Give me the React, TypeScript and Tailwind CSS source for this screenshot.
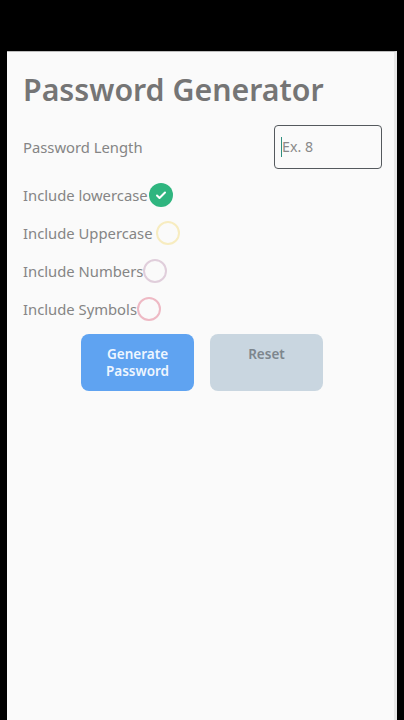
import React from "react";

function Circle({ border, className = "" }: { border: string; className?: string }) {
  return <span className={`block w-[24px] h-[24px] rounded-full border-2 shrink-0 ${border} ${className}`} />;
}

function Row({ label, children }: { label: string; children: React.ReactNode }) {
  return (
    <div className="flex items-center h-[38px]">
      <span className="text-[14.8px] leading-[24px] text-[#858585]">{label}</span>
      {children}
    </div>
  );
}

export default function App() {
  return (
    <div className="w-[404px] h-[720px] bg-black pt-[51px] pl-[7px] pr-[7px] overflow-hidden" style={{ fontFamily: '"Noto Sans", sans-serif' }}>
      <div className="relative h-[669px] bg-[#fafafa] border-t border-t-[#bdbdbd] border-r-[3px] border-r-[#e8e8e8] pl-[16px]">
        <h1 className="pt-[17px] text-[30.3px] leading-[42px] font-semibold text-[#757575]">Password Generator</h1>
        <div className="flex items-center justify-between mt-[14px] pr-[12px]">
          <span className="text-[14.8px] leading-[24px] text-[#858585]">Password Length</span>
          <div className="flex items-center w-[108px] h-[44px] rounded-[4px] border-[1.5px] border-[#54595d] pl-[5.5px] pb-[1px]">
            <span className="w-[1.5px] h-[20px] bg-[#2f8f7f]" />
            <span className="text-[14.2px] leading-[20px] text-[#8a8a8a]">Ex. 8</span>
          </div>
        </div>
        <div className="flex flex-col mt-[7px]">
          <Row label="Include lowercase">
            <span className="flex items-center justify-center w-[24px] h-[24px] ml-[1px] rounded-full bg-[#2fb57f] shrink-0">
              <svg width="12" height="12" viewBox="0 0 24 24" fill="none" stroke="#ffffff" strokeWidth="4" strokeLinecap="round" strokeLinejoin="round">
                <path d="M4 13l5 5L20 7" />
              </svg>
            </span>
          </Row>
          <Row label="Include Uppercase">
            <Circle border="border-[#f7ecc0]" className="ml-[3px]" />
          </Row>
          <Row label="Include Numbers">
            <Circle border="border-[#e0cedb]" />
          </Row>
          <Row label="Include Symbols">
            <Circle border="border-[#eeb9c4]" />
          </Row>
        </div>
        <div className="flex gap-[16px] ml-[58px] mt-[6px]">
          <button className="w-[113px] h-[57px] rounded-[8px] bg-[#5fa3f1] pt-[10px] pb-[10px] px-[20px] text-[13.5px] leading-[17px] font-semibold text-[#eef6ff]">
            Generate Password
          </button>
          <button className="flex justify-center w-[113px] h-[57px] rounded-[8px] bg-[#c9d6e0] pt-[12px] text-[13.5px] leading-[17px] font-semibold text-[#7d868d]">
            Reset
          </button>
        </div>
      </div>
    </div>
  );
}
